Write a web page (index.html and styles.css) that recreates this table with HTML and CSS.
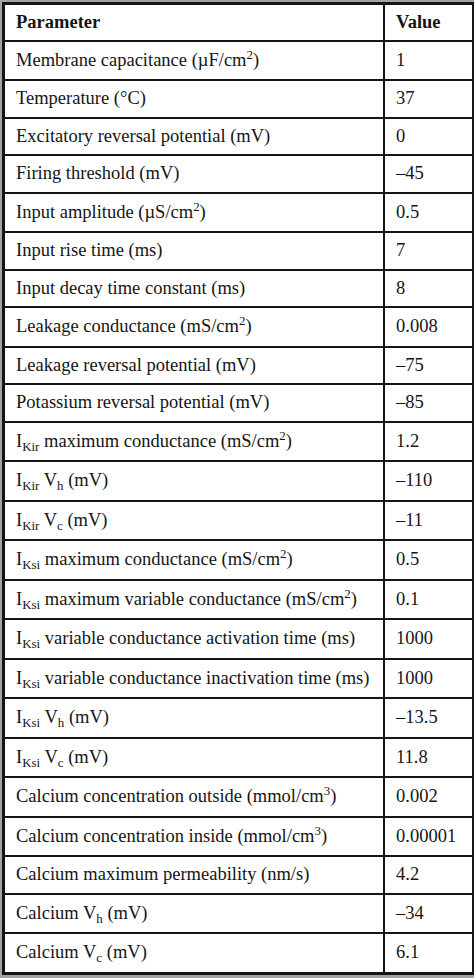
FILE: index.html
```html
<!DOCTYPE html>
<html lang="en">
<head>
<meta charset="utf-8">
<title>Parameters</title>
<link rel="stylesheet" href="styles.css">
</head>
<body>
<div class="frame">
<table class="params">
<colgroup><col class="c-name"><col class="c-val"></colgroup>
<thead>
<tr><th>Parameter</th><th>Value</th></tr>
</thead>
<tbody>
<tr class="tall"><td>Membrane capacitance (µF/cm<sup>2</sup>)</td><td>1</td></tr>
<tr><td>Temperature (°C)</td><td>37</td></tr>
<tr><td>Excitatory reversal potential (mV)</td><td>0</td></tr>
<tr><td>Firing threshold (mV)</td><td>–45</td></tr>
<tr class="tall"><td>Input amplitude (µS/cm<sup>2</sup>)</td><td>0.5</td></tr>
<tr><td>Input rise time (ms)</td><td>7</td></tr>
<tr><td>Input decay time constant (ms)</td><td>8</td></tr>
<tr class="tall"><td>Leakage conductance (mS/cm<sup>2</sup>)</td><td>0.008</td></tr>
<tr><td>Leakage reversal potential (mV)</td><td>–75</td></tr>
<tr><td>Potassium reversal potential (mV)</td><td>–85</td></tr>
<tr class="tall"><td>I<sub>Kir</sub> maximum conductance (mS/cm<sup>2</sup>)</td><td>1.2</td></tr>
<tr class="tall"><td>I<sub>Kir</sub> V<sub>h</sub> (mV)</td><td>–110</td></tr>
<tr class="tall"><td>I<sub>Kir</sub> V<sub>c</sub> (mV)</td><td>–11</td></tr>
<tr class="tall"><td>I<sub>Ksi</sub> maximum conductance (mS/cm<sup>2</sup>)</td><td>0.5</td></tr>
<tr class="tall"><td>I<sub>Ksi</sub> maximum variable conductance (mS/cm<sup>2</sup>)</td><td>0.1</td></tr>
<tr class="tall"><td>I<sub>Ksi</sub> variable conductance activation time (ms)</td><td>1000</td></tr>
<tr class="tall"><td>I<sub>Ksi</sub> variable conductance inactivation time (ms)</td><td>1000</td></tr>
<tr class="tall"><td>I<sub>Ksi</sub> V<sub>h</sub> (mV)</td><td>–13.5</td></tr>
<tr class="tall"><td>I<sub>Ksi</sub> V<sub>c</sub> (mV)</td><td>11.8</td></tr>
<tr class="tall"><td>Calcium concentration outside (mmol/cm<sup>3</sup>)</td><td>0.002</td></tr>
<tr class="tall"><td>Calcium concentration inside (mmol/cm<sup>3</sup>)</td><td>0.00001</td></tr>
<tr><td>Calcium maximum permeability (nm/s)</td><td>4.2</td></tr>
<tr class="tall"><td>Calcium V<sub>h</sub> (mV)</td><td>–34</td></tr>
<tr class="tall"><td>Calcium V<sub>c</sub> (mV)</td><td>6.1</td></tr>
</tbody>
</table>
</div>
</body>
</html>
```
FILE: styles.css
```css
html, body {
  margin: 0;
  padding: 0;
}
body {
  background: #a3a3a3;
  width: 474px;
  height: 978px;
  overflow: hidden;
}
.frame {
  padding: 2px 2px 0 2px;
}
.params {
  border-collapse: collapse;
  table-layout: fixed;
  width: 470px;
  background: #fff;
  color: #151515;
  font-family: "Liberation Serif", "Times New Roman", serif;
  font-size: 18.5px;
  line-height: 19.5px;
  border: 3px solid #151515;
}
.c-name { width: 380px; }
.c-val { width: 90px; }
.params th,
.params td {
  border: 2px solid #151515;
  padding: 8px 8px 8px 11px;
  text-align: left;
  vertical-align: middle;
  white-space: nowrap;
}
.params td + td,
.params th + th {
  padding-left: 11.5px;
}
.params th {
  font-weight: bold;
  padding-top: 7.5px;
  padding-bottom: 7.5px;
}
.params tr.tall td {
  padding-top: 9px;
  padding-bottom: 9px;
}
.params sub,
.params sup {
  font-size: 0.7em;
  line-height: 0;
}
.params sub {
  vertical-align: -0.32em;
}
.params sup {
  vertical-align: 0.55em;
}
```
